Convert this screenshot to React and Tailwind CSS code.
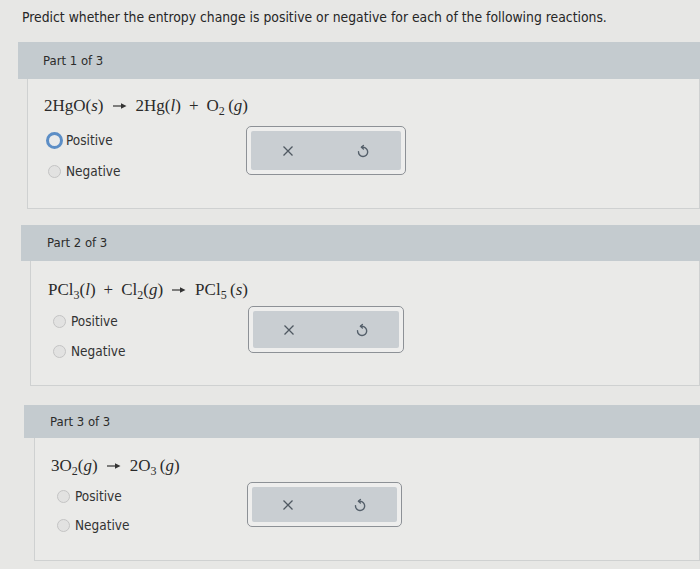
import React from "react";

const sans = { fontFamily: '"DejaVu Sans Condensed", "DejaVu Sans", sans-serif' };
const serif = { fontFamily: '"Liberation Serif", "DejaVu Serif", serif' };

function Arrow() {
  return (
    <svg width="14" height="8" viewBox="0 0 14 8" className="mx-[9px] inline-block">
      <line x1="0" y1="4" x2="9" y2="4" stroke="#333" strokeWidth="1.2" />
      <polygon points="8,1.2 13.5,4 8,6.8" fill="#333" />
    </svg>
  );
}

function Sub({ children }) {
  return <sub className="text-[12px] relative top-[4px] align-baseline">{children}</sub>;
}

function Radio({ checked, label }) {
  return (
    <div className="flex items-center">
      {checked ? (
        <span className="w-[17px] h-[17px] rounded-full border-[3px] border-[#5c8ec6] bg-[#e9eaea] mr-[3px] ml-[-2px]" />
      ) : (
        <span className="w-[13px] h-[13px] rounded-full border border-[#c4c4c4] bg-[#e2e2e1] mr-[5px]" />
      )}
      <span className="text-[13.5px] text-[#333]" style={sans}>
        {label}
      </span>
    </div>
  );
}

function UndoIcon() {
  return (
    <svg width="14" height="14" viewBox="0 0 14 14" fill="none" stroke="#55606b" strokeWidth="1.4" strokeLinecap="round" strokeLinejoin="round">
      <path d="M5.6 3.3 H7 A4.6 4.6 0 1 1 2.5 7.6" />
      <path d="M7.4 1.5 L5.4 3.3 L7.4 5.1" />
    </svg>
  );
}

function Buttons({ boxClass }) {
  return (
    <div className={"rounded-[5px] border border-[#8d9196] bg-[#eeeeed] p-[4px] " + boxClass}>
      <div className="w-full h-full rounded-[2px] bg-[#c9ced2] flex items-center justify-around">
        <svg width="12" height="12" viewBox="0 0 12 12">
          <path d="M1.5 1.5 L10.5 10.5 M10.5 1.5 L1.5 10.5" stroke="#4f5861" strokeWidth="1.3" />
        </svg>
        <UndoIcon />
      </div>
    </div>
  );
}

function Part({ title, cfg, equation, checkedFirst }) {
  return (
    <div className={cfg.wrap}>
      <div className={"bg-[#c4cbcf] flex items-center " + cfg.header}>
        <span className="text-[13px] text-[#2b2b2b]" style={sans}>{title}</span>
      </div>
      <div className={"border border-t-0 border-[#cfd1d1] bg-[#eaeae8] " + cfg.body}>
        <div className={"text-[17px] text-[#2a2a2a] leading-[24px] flex items-center " + cfg.eq} style={serif}>
          {equation}
        </div>
        <div className="flex">
          <div className={"flex flex-col " + cfg.radios}>
            <Radio checked={checkedFirst} label="Positive" />
            <Radio label="Negative" />
          </div>
          <Buttons boxClass={cfg.box} />
        </div>
      </div>
    </div>
  );
}

const cfg1 = {
  wrap: "mt-[16px]",
  header: "ml-[18px] h-[37px] pl-[25px]",
  body: "ml-[27px] h-[130px] pl-[16px]",
  eq: "pt-[15px] mb-[8px]",
  radios: "w-[202px] pt-[4px] gap-[11px] pl-[4px]",
  box: "w-[160px] h-[49px]",
};
const cfg2 = {
  wrap: "mt-[16px]",
  header: "ml-[21px] h-[36px] pl-[26px]",
  body: "ml-[30px] h-[125px] pl-[17px]",
  eq: "pt-[17px] mb-[4px]",
  radios: "w-[200px] pt-[5px] gap-[10px] pl-[5px]",
  box: "w-[156px] h-[47px]",
};
const cfg3 = {
  wrap: "mt-[19px]",
  header: "ml-[24px] h-[33px] pl-[26px]",
  body: "ml-[34px] h-[123px] pl-[16px]",
  eq: "pt-[16px] mb-[4px]",
  radios: "w-[196px] pt-[4px] gap-[9px] pl-[6px]",
  box: "w-[155px] h-[45px]",
};

export default function App() {
  return (
    <div className="w-[700px] h-[569px] bg-[#e7e7e5] overflow-hidden">
      <div className="pt-[8px] pl-[22px] text-[13.8px] text-[#262626] leading-[18px]" style={sans}>
        Predict whether the entropy change is positive or negative for each of the following reactions.
      </div>
      <Part
        title="Part 1 of 3"
        cfg={cfg1}
        checkedFirst
        equation={
          <>
            <span>2HgO(<i>s</i>)</span>
            <Arrow />
            <span>2Hg(<i>l</i>)</span>
            <span className="mx-[8px]">+</span>
            <span>O<Sub>2</Sub>&thinsp;(<i>g</i>)</span>
          </>
        }
      />
      <Part
        title="Part 2 of 3"
        cfg={cfg2}
        equation={
          <>
            <span>PCl<Sub>3</Sub>(<i>l</i>)</span>
            <span className="mx-[8px]">+</span>
            <span>Cl<Sub>2</Sub>(<i>g</i>)</span>
            <Arrow />
            <span>PCl<Sub>5</Sub>&thinsp;(<i>s</i>)</span>
          </>
        }
      />
      <Part
        title="Part 3 of 3"
        cfg={cfg3}
        equation={
          <>
            <span>3O<Sub>2</Sub>(<i>g</i>)</span>
            <Arrow />
            <span>2O<Sub>3</Sub>&thinsp;(<i>g</i>)</span>
          </>
        }
      />
    </div>
  );
}
